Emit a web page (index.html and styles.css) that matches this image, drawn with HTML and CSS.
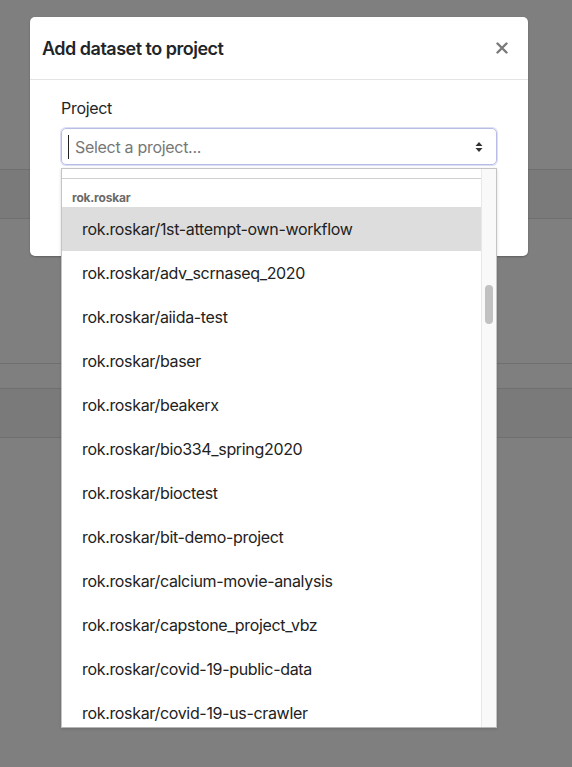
FILE: index.html
```html
<!DOCTYPE html>
<html lang="en">
<head>
    <meta charset="UTF-8">
    <meta name="viewport" content="width=device-width, initial-scale=1.0">
    <title>Add dataset to project</title>
    <link rel="stylesheet" href="styles.css">
</head>
<body>
    <!-- Page behind the backdrop -->
    <div class="page">
        <div class="row row-head"></div>
        <div class="row row-striped row-48"></div>
        <div class="row row-144"></div>
        <div class="row row-24"></div>
        <div class="row row-striped row-48"></div>
    </div>

    <!-- Modal -->
    <div class="modal">
        <div class="modal-header">
            <h5 class="modal-title">Add dataset to project</h5>
            <button class="close" aria-label="Close">
                <svg width="12" height="12" viewBox="0 0 12 12">
                    <path d="M1.5 1.5 L10.5 10.5 M10.5 1.5 L1.5 10.5" stroke="#7a7a7a" stroke-width="2.4" stroke-linecap="round"/>
                </svg>
            </button>
        </div>

        <div class="modal-body">
            <label class="form-label">Project</label>
            <div class="select-wrap">
                <div class="select-control">
                    <span class="cursor"></span>
                    <span class="placeholder">Select a project...</span>
                    <svg class="select-arrows" width="8" height="12" viewBox="0 0 8 12">
                        <path d="M4 1 L7.5 5 L0.5 5 Z M4 11 L7.5 7 L0.5 7 Z" fill="#333"/>
                    </svg>
                </div>

                <!-- Open options menu -->
                <div class="select-menu">
                    <div class="menu-list">
                        <div class="group-end"></div>
                        <div class="group-label">rok.roskar</div>
                        <ul class="options" id="options"></ul>
                    </div>
                    <div class="menu-scrollbar">
                        <div class="scroll-thumb"></div>
                    </div>
                </div>
            </div>
        </div>
    </div>

    <script>
        // Projects of the current namespace
        const projects = [
            "1st-attempt-own-workflow",
            "adv_scrnaseq_2020",
            "aiida-test",
            "baser",
            "beakerx",
            "bio334_spring2020",
            "bioctest",
            "bit-demo-project",
            "calcium-movie-analysis",
            "capstone_project_vbz",
            "covid-19-public-data",
            "covid-19-us-crawler"
        ];

        const list = document.getElementById("options");
        projects.forEach((name, i) => {
            const li = document.createElement("li");
            li.className = i === 0 ? "option active" : "option";
            li.textContent = "rok.roskar/" + name;
            list.appendChild(li);
        });
    </script>
</body>
</html>
```

FILE: styles.css
```css
/* Global Styles */
* {
    box-sizing: border-box;
    margin: 0;
    padding: 0;
}

body {
    font-family: Inter, "Liberation Sans", Arial, sans-serif;
    background-color: #7f7f7f;
    color: #212529;
    height: 767px;
    overflow: hidden;
    position: relative;
}

/* Page rows under the backdrop */
.row {
    border-bottom: 1px solid #6f6f6f;
}

.row-head {
    height: 170px;
}

.row-striped {
    background-color: #7a7a7a;
}

.row-48 {
    height: 49px;
}

.row-144 {
    height: 145px;
}

.row-24 {
    height: 25px;
}

/* Modal */
.modal {
    position: absolute;
    top: 17px;
    left: 30px;
    width: 498px;
    height: 239px;
    background-color: #fff;
    border-radius: 5px;
    box-shadow: 0 1px 2px rgba(0, 0, 0, 0.25);
}

.modal-header {
    height: 63px;
    display: flex;
    align-items: center;
    justify-content: space-between;
    padding: 0 20px 0 12px;
    border-bottom: 1px solid #e4e4e4;
}

.modal-title {
    font-size: 18px;
    font-weight: 600;
    letter-spacing: -0.5px;
    color: #212529;
}

.close {
    background: none;
    border: none;
    display: flex;
    cursor: pointer;
}

.modal-body {
    padding: 16px 31px;
}

.form-label {
    display: block;
    font-size: 16px;
    line-height: 24px;
    margin-bottom: 8px;
    letter-spacing: -0.3px;
    color: #212529;
}

/* Select */
.select-wrap {
    position: relative;
}

.select-control {
    height: 37px;
    display: flex;
    align-items: center;
    padding: 0 13px 0 6px;
    border: 1px solid #b9bde6;
    border-radius: 5px;
    box-shadow: 0 0 0 1px #dcdef3;
}

.cursor {
    width: 1px;
    height: 24px;
    background-color: #222;
    margin-right: 6px;
}

.placeholder {
    flex: 1;
    font-size: 16px;
    letter-spacing: -0.3px;
    color: #777;
}

/* Options menu */
.select-menu {
    position: absolute;
    top: 40px;
    left: 0;
    width: 436px;
    height: 560px;
    display: flex;
    background-color: #fff;
    border: 1px solid #c4c4c4;
    border-bottom-color: #b5b5b5;
    overflow: hidden;
    box-shadow: 0 1px 3px rgba(0, 0, 0, 0.15);
}

.menu-list {
    flex: 1;
}

.group-end {
    height: 10px;
    border-bottom: 1px solid #d0d0d0;
}

.group-label {
    height: 28px;
    padding: 11px 10px 0;
    font-size: 12px;
    line-height: 16px;
    font-weight: 700;
    letter-spacing: -0.2px;
    color: #6a6a6a;
}

.options {
    list-style-type: none;
}

.option {
    height: 44px;
    line-height: 44px;
    padding: 0 20px;
    font-size: 16px;
    letter-spacing: -0.33px;
    color: #222;
    white-space: nowrap;
}

.option.active {
    background-color: #dddddd;
}

.menu-scrollbar {
    width: 15px;
    background-color: #f9f9f9;
    border-left: 1px solid #e8e8e8;
    padding: 116px 0 0 3px;
}

.scroll-thumb {
    width: 8px;
    height: 39px;
    border-radius: 4px;
    background-color: #c1c1c1;
}
```
